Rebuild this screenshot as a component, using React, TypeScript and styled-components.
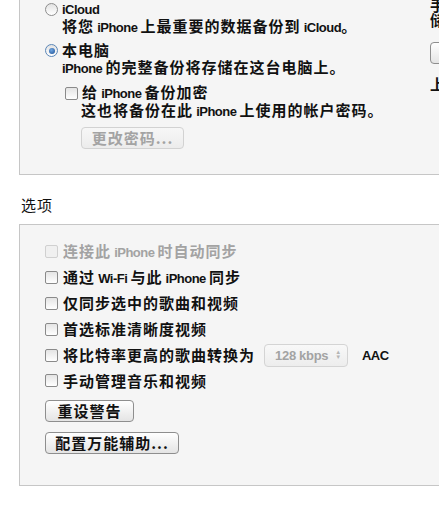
import React from "react";
import styled, { createGlobalStyle, css } from "styled-components";

const GlobalStyle = createGlobalStyle`
  html, body {
    margin: 0;
    padding: 0;
    background: #ffffff;
    overflow: hidden;
  }
  body {
    font-family: "Noto Sans CJK SC", "Liberation Sans", sans-serif;
    color: #111;
  }
`;

const StPage = styled.div`
  width: 439px;
  height: 516px;
  overflow: hidden;
  padding-left: 19px;
  box-sizing: border-box;
`;

const StPanel = styled.div<{ $top?: boolean }>`
  width: 760px;
  box-sizing: border-box;
  background: #f5f5f5;
  border: 1px solid #c6c6c6;
  padding: ${(p) => (p.$top ? "16px 0 25px 25px" : "14px 0 31px 25px")};
  margin-top: ${(p) => (p.$top ? "-17px" : "0")};
  display: ${(p) => (p.$top ? "flex" : "block")};
`;

const StLeftCol = styled.div`
  width: 385px;
  flex-shrink: 0;
`;

const StRightCol = styled.div`
  flex: 1;
  margin-top: -4px;
`;

const StText = styled.span<{ $muted?: boolean }>`
  font-family: "Noto Sans CJK SC", sans-serif;
  font-size: 15px;
  line-height: 18px;
  font-weight: 700;
  letter-spacing: 1px;
  color: ${(p) => (p.$muted ? "#a3a3a3" : "#111")};
  white-space: nowrap;
`;

const StLat = styled.span`
  font-family: "Liberation Sans", Arial, sans-serif;
  font-size: 13px;
  font-weight: 700;
  letter-spacing: -0.5px;
  white-space: pre;
`;

const StLine = styled.div`
  height: 18px;
  line-height: 18px;
  display: flex;
  align-items: center;
`;

const StRadioOption = styled.div<{ $gap?: number }>`
  display: flex;
  gap: 4px;
  margin-bottom: ${(p) => p.$gap ?? 0}px;
`;

const StRadio = styled.span<{ $checked?: boolean }>`
  width: 11px;
  height: 11px;
  margin-top: 3px;
  border-radius: 50%;
  border: 1px solid ${(p) => (p.$checked ? "#5b87b8" : "#8d8d8d")};
  background: linear-gradient(#e2e2e2, #ffffff);
  flex-shrink: 0;
  position: relative;
  ${(p) =>
    p.$checked &&
    css`
      &::after {
        content: "";
        position: absolute;
        left: 2.5px;
        top: 2.5px;
        width: 6px;
        height: 6px;
        border-radius: 50%;
        background: radial-gradient(circle at 40% 35%, #6fa6e2, #1c4f93);
      }
    `}
`;

const StCheck = styled.span<{ $disabled?: boolean }>`
  width: 11px;
  height: 11px;
  border-radius: 2px;
  border: 1px solid ${(p) => (p.$disabled ? "#d0d0d0" : "#8a8a8a")};
  background: ${(p) =>
    p.$disabled ? "#f0f0f0" : "linear-gradient(#e4e4e4, #ffffff)"};
  flex-shrink: 0;
`;

const StNested = styled.div`
  margin: 7px 0 0 3px;
`;

const StCheckRow = styled.div`
  display: flex;
  align-items: center;
  gap: 4px;
  height: 18px;
`;

const StIndented = styled.div`
  padding-left: 16px;
`;

const StButton = styled.button<{ $disabled?: boolean; $w: number }>`
  display: block;
  width: ${(p) => p.$w}px;
  height: 22px;
  padding: 0;
  border-radius: 4px;
  border: 1px solid ${(p) => (p.$disabled ? "#d2d2d2" : "#8e8e8e")};
  background: ${(p) =>
    p.$disabled
      ? "linear-gradient(#f7f7f7, #ececec)"
      : "linear-gradient(#ffffff, #e4e4e4)"};
  font-family: "Noto Sans CJK SC", sans-serif;
  font-size: 15px;
  font-weight: 700;
  letter-spacing: 1px;
  line-height: 20px;
  color: ${(p) => (p.$disabled ? "#a3a3a3" : "#111")};
  text-align: center;
  cursor: default;
`;

const StSectionTitle = styled.div`
  margin: 21px 0 10px 2px;
  height: 18px;
  line-height: 18px;
  font-family: "Noto Sans CJK SC", sans-serif;
  font-size: 15px;
  letter-spacing: 1px;
  color: #111;
`;

const StOptionRow = styled.div`
  display: flex;
  align-items: center;
  gap: 5px;
  height: 25.8px;
`;

const StSelect = styled.span`
  display: inline-flex;
  align-items: center;
  gap: 7px;
  height: 21px;
  margin: 0 9px 0 4px;
  padding: 0 6px 0 10px;
  border: 1px solid #d4d4d4;
  border-radius: 4px;
  background: linear-gradient(#f8f8f8, #ededed);
  font-family: "Liberation Sans", Arial, sans-serif;
  font-size: 13px;
  font-weight: 700;
  letter-spacing: -0.3px;
  color: #a3a3a3;
`;

const StArrows = styled.span`
  display: inline-flex;
  flex-direction: column;
  font-size: 6px;
  line-height: 5px;
  color: #b5b5b5;
`;

const StButtonStack = styled.div`
  display: flex;
  flex-direction: column;
  gap: 10px;
  margin-top: 6px;
`;

const StRightLine = styled.div`
  height: 15px;
  line-height: 15px;
`;

const StRightButton = styled(StButton)`
  margin: 16px 0 11px;
`;

export default function App() {
  return (
    <>
      <GlobalStyle />
      <StPage>
        <StPanel $top>
          <StLeftCol>
            <StRadioOption $gap={5}>
              <StRadio />
              <div>
                <StLine>
                  <StText>
                    <StLat>iCloud</StLat>
                  </StText>
                </StLine>
                <StLine>
                  <StText>
                    将您<StLat> iPhone </StLat>上最重要的数据备份到<StLat> iCloud</StLat>。
                  </StText>
                </StLine>
              </div>
            </StRadioOption>
            <StRadioOption>
              <StRadio $checked />
              <div>
                <StLine>
                  <StText>本电脑</StText>
                </StLine>
                <StLine>
                  <StText>
                    <StLat>iPhone </StLat>的完整备份将存储在这台电脑上。
                  </StText>
                </StLine>
                <StNested>
                  <StCheckRow>
                    <StCheck />
                    <StText>
                      给<StLat> iPhone </StLat>备份加密
                    </StText>
                  </StCheckRow>
                  <StIndented>
                    <StLine>
                      <StText>
                        这也将备份在此<StLat> iPhone </StLat>上使用的帐户密码。
                      </StText>
                    </StLine>
                    <StButton $disabled $w={103} style={{ marginTop: 7 }}>
                      更改密码...
                    </StButton>
                  </StIndented>
                </StNested>
              </div>
            </StRadioOption>
          </StLeftCol>
          <StRightCol>
            <StRightLine>
              <StText>
                手动将您的<StLat> iPhone </StLat>备份到这台电脑上或恢复存
              </StText>
            </StRightLine>
            <StRightLine>
              <StText>储在这台电脑上的备份。</StText>
            </StRightLine>
            <StRightButton $w={90}>立即备份</StRightButton>
            <StRightLine>
              <StText>上次备份时间：</StText>
            </StRightLine>
          </StRightCol>
        </StPanel>

        <StSectionTitle>选项</StSectionTitle>

        <StPanel>
          <StOptionRow>
            <StCheck $disabled />
            <StText $muted>
              连接此<StLat> iPhone </StLat>时自动同步
            </StText>
          </StOptionRow>
          <StOptionRow>
            <StCheck />
            <StText>
              通过<StLat> Wi-Fi </StLat>与此<StLat> iPhone </StLat>同步
            </StText>
          </StOptionRow>
          <StOptionRow>
            <StCheck />
            <StText>仅同步选中的歌曲和视频</StText>
          </StOptionRow>
          <StOptionRow>
            <StCheck />
            <StText>首选标准清晰度视频</StText>
          </StOptionRow>
          <StOptionRow>
            <StCheck />
            <StText>将比特率更高的歌曲转换为</StText>
            <StSelect>
              128 kbps
              <StArrows>
                <span>▲</span>
                <span>▼</span>
              </StArrows>
            </StSelect>
            <StLat>AAC</StLat>
          </StOptionRow>
          <StOptionRow>
            <StCheck />
            <StText>手动管理音乐和视频</StText>
          </StOptionRow>
          <StButtonStack>
            <StButton $w={89}>重设警告</StButton>
            <StButton $w={134}>配置万能辅助...</StButton>
          </StButtonStack>
        </StPanel>
      </StPage>
    </>
  );
}
